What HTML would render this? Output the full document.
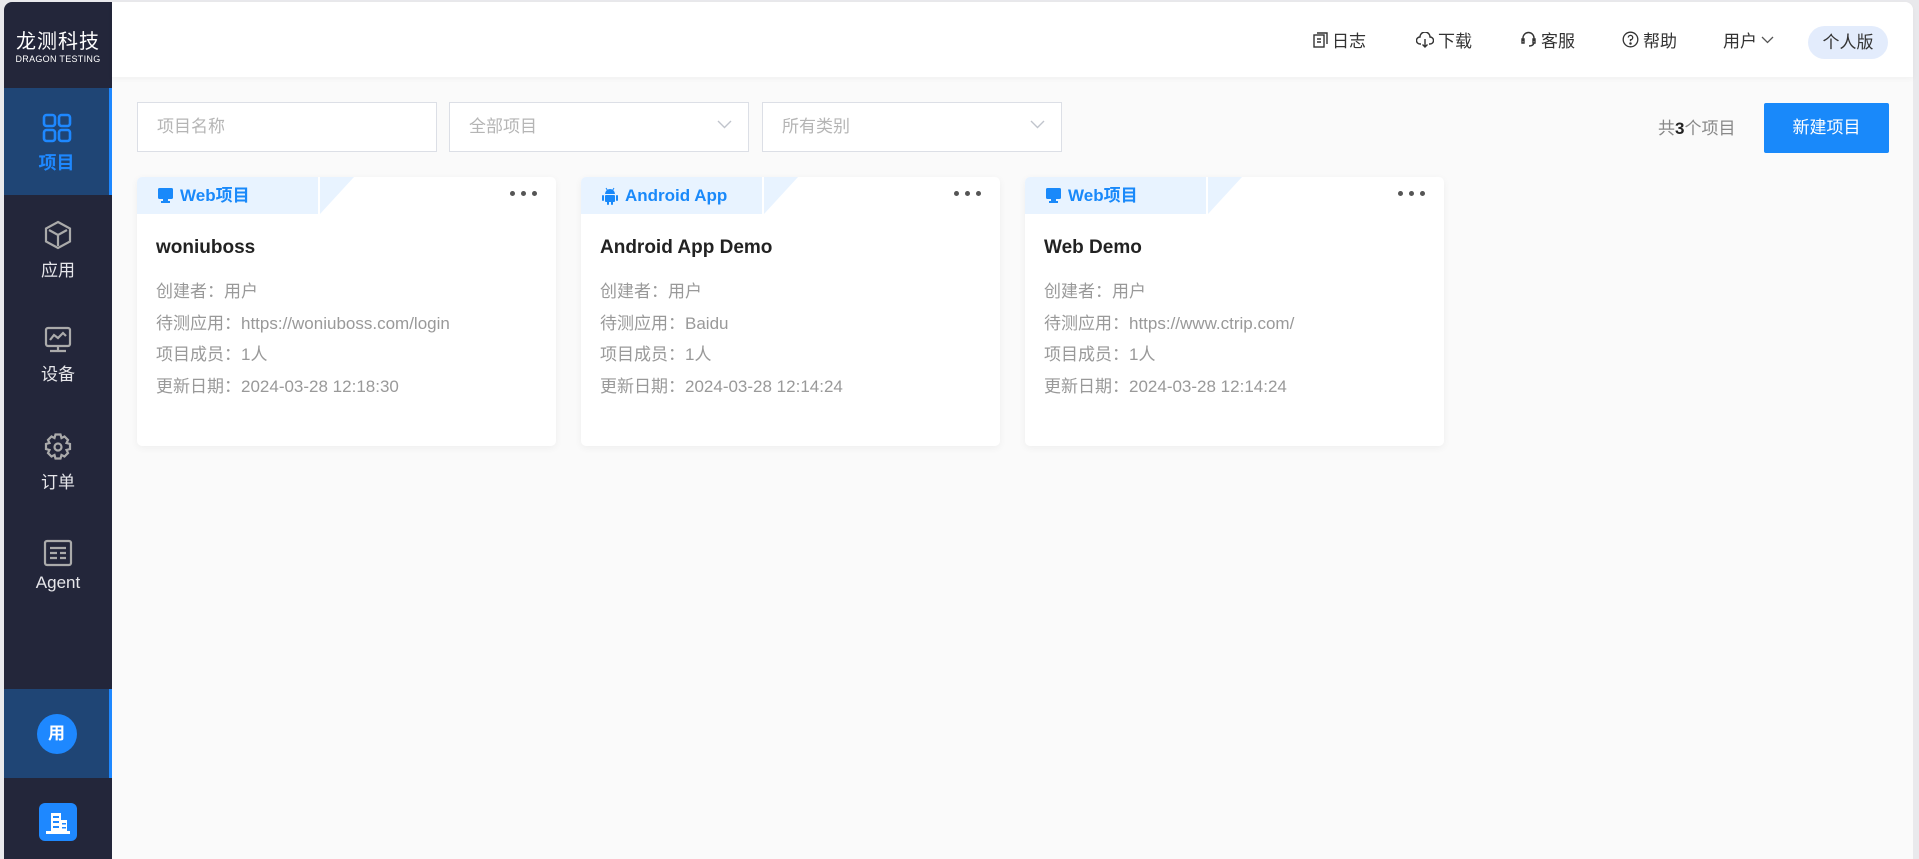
<!DOCTYPE html>
<html><head><meta charset="utf-8">
<style>
*{box-sizing:border-box;margin:0;padding:0}
body{width:1919px;height:859px;overflow:hidden;background:#e9e9ec;font-family:"Liberation Sans","Noto Sans CJK SC",sans-serif;position:relative}
#side{position:absolute;left:4px;top:2px;width:108px;height:857px;background:#23263a;border-radius:8px 0 0 0;color:#e6e6ea}
.logo{position:absolute;top:28px;left:0;width:108px;text-align:center}
.logo .cn{font-size:20px;letter-spacing:1px;color:#fff;line-height:24px}
.logo .en{font-size:9px;letter-spacing:.3px;color:#fff;line-height:11px}
.item{position:absolute;left:0;width:108px;text-align:center;font-size:17px}
.item svg{display:block;margin:0 auto 6px}
.act{background:#1f4575;border-right:3px solid #1e88ff}
#main{position:absolute;left:112px;top:2px;width:1801px;height:857px;background:#fafafa;border-radius:0 8px 0 0}
#hdr{height:75px;background:#fff;border-radius:0 8px 0 0;box-shadow:0 2px 6px rgba(0,0,0,.04);position:relative}
.nav{position:absolute;top:25px;font-size:17px;color:#333;display:flex;align-items:center;gap:4px}
.pill{position:absolute;left:1696px;top:24px;width:80px;height:33px;border-radius:17px;background:#e3ecfc;text-align:center;line-height:33px;font-size:17px;color:#333}
.inp{position:absolute;top:100px;height:50px;background:#fff;border:1px solid #dcdfe6;font-size:17px;color:#b5b5b5;padding:0 19px;line-height:48px}
.inp .ar{position:absolute;right:16px;top:17px}
.btn{position:absolute;left:1652px;top:101px;width:125px;height:50px;background:#1989fa;color:#fff;font-size:17px;text-align:center;line-height:50px;border-radius:2px}
.card{position:absolute;top:175px;width:419px;height:269px;background:#fff;border-radius:5px;box-shadow:0 2px 8px rgba(0,0,0,.05);overflow:hidden}
.tag{position:absolute;left:0;top:0;width:181px;height:37px;background:#e8f3ff;color:#1989fa;font-weight:bold;font-size:17px;line-height:37px;padding-left:20px;display:flex;align-items:center;gap:6px}
.tri{position:absolute;left:183px;top:0;width:0;height:0;border-top:37px solid #e8f3ff;border-right:34px solid transparent}
.dots{position:absolute;right:19px;top:14px;display:flex;gap:6px}
.dots i{width:5px;height:5px;border-radius:50%;background:#555;display:block}
.ttl{position:absolute;left:19px;top:60px;font-size:19px;font-weight:bold;color:#222}
.info{position:absolute;left:19px;top:99px;font-size:17px;color:#999;line-height:31.5px}
</style></head><body>
<div id="side">
 <div class="logo"><div class="cn">龙测科技</div><div class="en">DRAGON TESTING</div></div>
 <div class="item act" style="top:86px;height:107px;padding-top:25px;color:#1e88ff;font-weight:bold;font-size:18px">
  <svg width="30" height="30" viewBox="0 0 30 30" fill="none" stroke="#1e88ff" stroke-width="2.6"><rect x="2" y="2" width="11" height="11" rx="2.5"/><rect x="17" y="2" width="11" height="11" rx="2.5"/><rect x="2" y="17" width="11" height="11" rx="2.5"/><rect x="17" y="17" width="11" height="11" rx="2.5"/></svg>项目</div>
 <div class="item" style="top:218px">
  <svg width="28" height="30" viewBox="0 0 28 30" fill="none" stroke="#aaa" stroke-width="2.2"><path d="M14 2 L26 8.5 V21.5 L14 28 L2 21.5 V8.5 Z"/><path d="M5 10 L14 15 L23 10 M14 15 V26"/></svg>应用</div>
 <div class="item" style="top:324px">
  <svg width="28" height="28" viewBox="0 0 28 28" fill="none" stroke="#aaa" stroke-width="2.2"><rect x="2" y="2" width="24" height="18" rx="2"/><path d="M6 14 L10 9 L14 12 L19 7 L22 10 M14 20 V25 M6 25 H22"/></svg>设备</div>
 <div class="item" style="top:430px">
  <svg width="30" height="30" viewBox="0 0 30 30" fill="none" stroke="#aaa" stroke-width="2.2"><path d="M12.5 2.5h5l1 3.5 3-1.5 3.5 3.5-1.5 3 3.5 1v5l-3.5 1 1.5 3-3.5 3.5-3-1.5-1 3.5h-5l-1-3.5-3 1.5-3.5-3.5 1.5-3-3.5-1v-5l3.5-1-1.5-3 3.5-3.5 3 1.5z"/><circle cx="15" cy="15" r="3.5"/></svg>订单</div>
 <div class="item" style="top:537px">
  <svg width="30" height="28" viewBox="0 0 30 28" fill="none" stroke="#aaa" stroke-width="2.2"><rect x="2" y="2" width="26" height="24" rx="2"/><path d="M7 9H23M7 14H14M17 14H23M7 19H14M17 19H23"/></svg>Agent</div>
 <div class="item act" style="top:687px;height:89px"><div style="width:40px;height:40px;border-radius:50%;background:#1e88ff;color:#fff;font-weight:bold;font-size:17px;line-height:40px;margin:25px auto 0">用</div></div>
 <div class="item" style="top:801px"><div style="width:38px;height:38px;border-radius:6px;background:#1e88ff;margin:0 auto;position:relative">
  <svg width="38" height="38" viewBox="0 0 38 38" fill="#fff"><rect x="12" y="10" width="10" height="19"/><rect x="22" y="17" width="6" height="12"/><rect x="7" y="28" width="24" height="3"/><g fill="#1e88ff"><rect x="14" y="13" width="6" height="2"/><rect x="14" y="18" width="6" height="2"/><rect x="14" y="23" width="6" height="2"/><rect x="23" y="20" width="4" height="1.5"/><rect x="23" y="24" width="4" height="1.5"/></g></svg></div></div>
</div>
<div id="main">
 <div id="hdr">
  <div class="nav" style="left:1201px"><svg width="15" height="16" viewBox="0 0 15 16" fill="none" stroke="#333" stroke-width="1.4"><rect x="1" y="3" width="10" height="12"/><path d="M4 1H14V12M4 7H8M4 10H8"/></svg>日志</div>
  <div class="nav" style="left:1304px"><svg width="18" height="16" viewBox="0 0 18 16" fill="none" stroke="#333" stroke-width="1.4"><path d="M5 12H4A3.5 3.5 0 0 1 4 5 A5 5 0 0 1 14 5 A3.5 3.5 0 0 1 14 12H13M9 7V15M6.5 12.5L9 15L11.5 12.5"/></svg>下载</div>
  <div class="nav" style="left:1408px"><svg width="17" height="17" viewBox="0 0 17 17" fill="none" stroke="#333" stroke-width="1.4"><path d="M3 10V7A5.5 5.5 0 0 1 14 7V10M3 8h-1v4h2v-4zM14 8h1v4h-2v-4zM14 12Q13 15 9 15"/></svg>客服</div>
  <div class="nav" style="left:1510px"><svg width="17" height="17" viewBox="0 0 17 17" fill="none" stroke="#333" stroke-width="1.3"><circle cx="8.5" cy="8.5" r="7.3"/><path d="M6.3 6.5A2.2 2.2 0 1 1 8.5 8.8V10.3"/><circle cx="8.5" cy="12.5" r=".6" fill="#333"/></svg>帮助</div>
  <div class="nav" style="left:1611px">用户 <svg width="13" height="8" viewBox="0 0 13 8" fill="none" stroke="#555" stroke-width="1.3"><path d="M1 1L6.5 6.5L12 1"/></svg></div>
  <div class="pill">个人版</div>
 </div>
 <div class="inp" style="left:25px;width:300px">项目名称</div>
 <div class="inp" style="left:337px;width:300px">全部项目<svg class="ar" width="15" height="9" viewBox="0 0 15 9" fill="none" stroke="#c0c4cc" stroke-width="1.4"><path d="M1 1L7.5 7.5L14 1"/></svg></div>
 <div class="inp" style="left:650px;width:300px">所有类别<svg class="ar" width="15" height="9" viewBox="0 0 15 9" fill="none" stroke="#c0c4cc" stroke-width="1.4"><path d="M1 1L7.5 7.5L14 1"/></svg></div>
 <div style="position:absolute;left:1546px;top:112px;font-size:17px;color:#888">共<b style="color:#222">3</b>个项目</div>
 <div class="btn">新建项目</div>

 <div class="card" style="left:25px"><div class="tag"><svg width="17" height="17" viewBox="0 0 17 17" fill="#1989fa"><rect x="1" y="1" width="15" height="11" rx="1.5"/><rect x="6" y="12" width="5" height="2"/><rect x="4" y="14" width="9" height="2"/></svg>Web项目</div><div class="tri"></div><div class="dots"><i></i><i></i><i></i></div>
  <div class="ttl">woniuboss</div><div class="info">创建者：用户<br>待测应用：https://woniuboss.com/login<br>项目成员：1人<br>更新日期：2024-03-28 12:18:30</div></div>
 <div class="card" style="left:469px"><div class="tag"><svg width="18" height="18" viewBox="0 0 18 18" fill="#1989fa"><path d="M4 7A5 5 0 0 1 14 7Z"/><rect x="4" y="8" width="10" height="7" rx="1"/><rect x="1" y="8" width="2" height="6" rx="1"/><rect x="15" y="8" width="2" height="6" rx="1"/><rect x="6" y="14" width="2" height="4" rx="1"/><rect x="10" y="14" width="2" height="4" rx="1"/><path d="M5 1L6.5 3.5M13 1L11.5 3.5" stroke="#1989fa" stroke-width="1"/></svg>Android App</div><div class="tri"></div><div class="dots"><i></i><i></i><i></i></div>
  <div class="ttl">Android App Demo</div><div class="info">创建者：用户<br>待测应用：Baidu<br>项目成员：1人<br>更新日期：2024-03-28 12:14:24</div></div>
 <div class="card" style="left:913px"><div class="tag"><svg width="17" height="17" viewBox="0 0 17 17" fill="#1989fa"><rect x="1" y="1" width="15" height="11" rx="1.5"/><rect x="6" y="12" width="5" height="2"/><rect x="4" y="14" width="9" height="2"/></svg>Web项目</div><div class="tri"></div><div class="dots"><i></i><i></i><i></i></div>
  <div class="ttl">Web Demo</div><div class="info">创建者：用户<br>待测应用：https://www.ctrip.com/<br>项目成员：1人<br>更新日期：2024-03-28 12:14:24</div></div>
</div>
</body></html>
